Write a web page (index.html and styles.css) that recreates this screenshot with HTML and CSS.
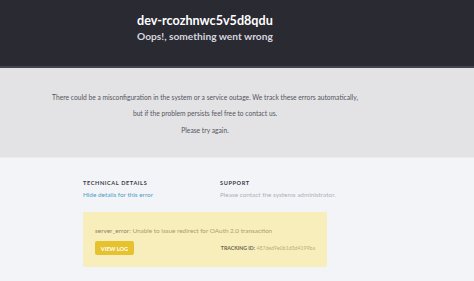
FILE: index.html
```html
<!DOCTYPE html>
<html lang="en">
<head>
  <meta charset="UTF-8">
  <title>Error</title>
  <link rel="stylesheet" href="styles.css">
</head>
<body>
  <header class="top">
    <h1>dev-rcozhnwc5v5d8qdu</h1>
    <h2>Oops!, something went wrong</h2>
  </header>

  <section class="message">
    <p>There could be a misconfiguration in the system or a service outage. We track these errors automatically,</p>
    <p>but if the problem persists feel free to contact us.</p>
    <p>Please try again.</p>
  </section>

  <section class="details">
    <div class="cols">
      <div>
        <h3>Technical details</h3>
        <a href="#" class="link">Hide details for this error</a>
      </div>
      <div>
        <h3>Support</h3>
        <span class="muted">Please contact the systems administrator.</span>
      </div>
    </div>

    <div class="notice">
      <p class="error"><strong>server_error</strong>: Unable to issue redirect for OAuth 2.0 transaction</p>
      <div class="notice-row">
        <button class="log">VIEW LOG</button>
        <span class="tracking"><b>TRACKING ID:</b> 487ded9e0b1d3d4199ba</span>
      </div>
    </div>
  </section>
</body>
</html>
```

FILE: styles.css
```css
* {
  box-sizing: border-box;
}
body {
  margin: 0;
  font-family: Lato, 'Open Sans', sans-serif;
  background-color: #f3f4f8;
  height: 281px;
  overflow: hidden;
}
.top {
  background-color: #2a2a33;
  height: 68px;
  padding: 12px 0 0 137px;
  border-bottom: 2px solid #44444c;
}
.top h1 {
  margin: 0;
  color: #fff;
  font-size: 12.6px;
  font-weight: 700;
  line-height: 17px;
}
.top h2 {
  margin: 0;
  color: #d6d6de;
  font-size: 10.2px;
  font-weight: 700;
  line-height: 14px;
}
.message {
  background-color: #e3e3e6;
  height: 90px;
  width: 474px;
  padding: 21px 64px 0 0;
  text-align: center;
  border-bottom: 1px solid #ececf0;
}
.message p {
  margin: 0;
  font-size: 6.7px;
  line-height: 16.3px;
  color: #55555c;
}
.details {
  padding: 21px 0 0 83px;
}
.cols {
  display: grid;
  grid-template-columns: 137px auto;
  font-size: 6.4px;
  line-height: 9px;
}
.cols h3 {
  margin: 0 0 3px;
  font-size: 5.6px;
  font-weight: 700;
  letter-spacing: 0.6px;
  text-transform: uppercase;
  color: #3a3a44;
  line-height: 8px;
}
.link {
  display: block;
  color: #4f9dc6;
  text-decoration: none;
}
.muted {
  display: block;
  color: #b0b0b8;
}
.notice {
  margin-top: 13px;
  width: 244px;
  height: 55px;
  background-color: #f8eebb;
  border-radius: 2px;
  padding: 14px 12px 0;
}
.error {
  margin: 0;
  font-size: 6.4px;
  line-height: 9px;
  color: #a8a06a;
}
.error strong {
  font-weight: 400;
  color: #8c8460;
}
.notice-row {
  display: flex;
  align-items: center;
  justify-content: space-between;
  margin-top: 6px;
}
.log {
  border: none;
  border-radius: 2px;
  background-color: #e6c22f;
  color: #fff;
  font-family: inherit;
  font-size: 5.6px;
  font-weight: 700;
  width: 39px;
  height: 14px;
  padding: 0;
}
.tracking {
  font-size: 5.2px;
  color: #b8ae82;
}
.tracking b {
  color: #6c6650;
}
```
